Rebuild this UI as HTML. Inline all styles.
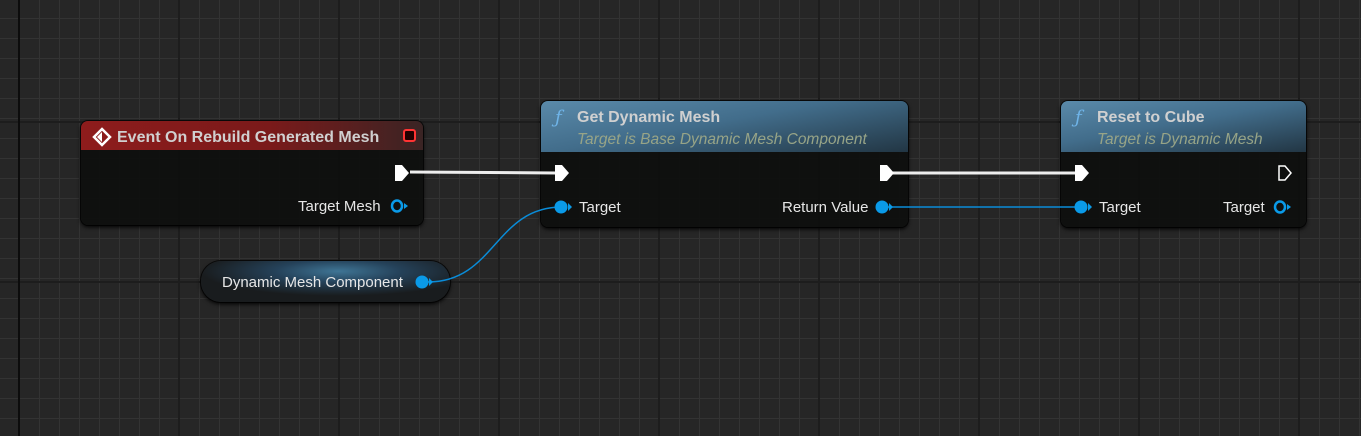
<!DOCTYPE html>
<html><head><meta charset="utf-8"><style>
*{margin:0;padding:0;box-sizing:border-box}
body{width:1361px;height:436px;overflow:hidden;position:relative;font-family:"Liberation Sans",sans-serif;
background-color:#262626;
background-image:
linear-gradient(90deg,transparent 19px,#0c0c0c 19px,#0c0c0c 21px,transparent 21px),
linear-gradient(90deg,#1d1d1d 2px,transparent 2px),
linear-gradient(0deg,transparent 158px,#1d1d1d 158px,#1d1d1d 160px,transparent 160px),
linear-gradient(90deg,#333 1px,transparent 1px),
linear-gradient(0deg,#333 1px,transparent 1px);
background-size:100% 100%,160px 160px,160px 160px,20px 20px,20px 20px;
background-repeat:no-repeat,repeat,repeat,repeat,repeat;
background-position:-1px 0,18px 0,0 -39px,19px 0,0 19px;}
.node{position:absolute;border-radius:7px;background:rgba(14,15,14,0.94);box-shadow:0 2px 4px #000,0 0 0 1px #0a0a0a;overflow:hidden}
.hdr{position:absolute;left:0;right:0;top:0}
.t{position:absolute;color:#d0d0d0;font-weight:bold;font-size:16px;white-space:nowrap}
.s{position:absolute;color:#97a487;font-style:italic;font-size:15.5px;white-space:nowrap}
.l{position:absolute;color:#e6e6e6;font-size:15px;white-space:nowrap}
.f{position:absolute;color:#6fb4e8;font-style:italic;font-family:"DejaVu Serif",serif;font-size:18px}
svg{position:absolute;left:0;top:0}
</style></head><body>

<div class="node" style="left:81px;top:121px;width:342px;height:104px">
 <div class="hdr" style="height:29px;background:linear-gradient(90deg,#8e1c1c 0%,#7a1a1a 55%,#3a2424 100%)"></div>
 <div class="t" style="left:36px;top:8px">Event On Rebuild Generated Mesh</div>
 <div class="l" style="left:217px;top:77px">Target Mesh</div>
</div>

<div class="node" style="left:541px;top:101px;width:367px;height:126px">
 <div class="hdr" style="height:51px;background:linear-gradient(170deg,#5a8aaa 0%,#426d8b 45%,#223644 100%)"></div>
 <div class="f" style="left:14px;top:6px">ƒ</div>
 <div class="t" style="left:36px;top:8px">Get Dynamic Mesh</div>
 <div class="s" style="left:36px;top:30px">Target is Base Dynamic Mesh Component</div>
 <div class="l" style="left:38px;top:98px">Target</div>
 <div class="l" style="left:241px;top:98px">Return Value</div>
</div>

<div class="node" style="left:1061px;top:101px;width:245px;height:126px">
 <div class="hdr" style="height:51px;background:linear-gradient(170deg,#5a8aaa 0%,#426d8b 45%,#223644 100%)"></div>
 <div class="f" style="left:14px;top:6px">ƒ</div>
 <div class="t" style="left:36px;top:8px">Reset to Cube</div>
 <div class="s" style="left:36px;top:30px">Target is Dynamic Mesh</div>
 <div class="l" style="left:38px;top:98px">Target</div>
 <div class="l" style="left:162px;top:98px">Target</div>
</div>

<div class="node" style="left:201px;top:261px;width:249px;height:41px;border-radius:20px;background:radial-gradient(ellipse 55% 60% at 55% 25%,#3f7595 0%,#25425a 45%,#191c1e 100%)">
 <div class="l" style="left:21px;top:13px">Dynamic Mesh Component</div>
</div>

<svg width="1361" height="436">
 <line x1="410" y1="172" x2="556" y2="173" stroke="#eee" stroke-width="3"/>
 <line x1="890" y1="173" x2="1076" y2="173" stroke="#eee" stroke-width="3"/>
 <line x1="886" y1="207" x2="1080" y2="207" stroke="#0a8cd8" stroke-width="1.5"/>
 <path d="M428 282 C495 282 495 207 562 207" fill="none" stroke="#0a8cd8" stroke-width="1.5"/>
 <path d="M102 129 L110 137 L102 145 L94 137 Z" fill="none" stroke="#fff" stroke-width="2.5"/>
 <path d="M102 132 L102 142 L97 137 Z" fill="#fff"/>
 <rect x="404" y="130" width="11" height="11" rx="2" fill="#200" stroke="#f33" stroke-width="2"/>
 <path d="M395 165 h7 l7 8 l-7 8 h-7 z" fill="#fff"/>
 <path d="M555 165 h7 l7 8 l-7 8 h-7 z" fill="#fff"/>
 <path d="M880 165 h7 l7 8 l-7 8 h-7 z" fill="#fff"/>
 <path d="M1075 165 h7 l7 8 l-7 8 h-7 z" fill="#fff"/>
 <path d="M1279 166 h6 l6 7 l-6 7 h-6 z" fill="none" stroke="#fff" stroke-width="1.5"/>
 <ellipse cx="397" cy="206" rx="5" ry="5.5" fill="none" stroke="#0a9ae8" stroke-width="2.5"/><path d="M404 203 l4 3 l-4 3z" fill="#0a9ae8"/>
 <ellipse cx="561" cy="207" rx="6.5" ry="6.5" fill="#0a9ae8"/><path d="M568 203 l4 4 l-4 4z" fill="#0a9ae8"/>
 <ellipse cx="882" cy="207" rx="6.5" ry="6.5" fill="#0a9ae8"/><path d="M889 203 l4 4 l-4 4z" fill="#0a9ae8"/>
 <ellipse cx="1081" cy="207" rx="6.5" ry="6.5" fill="#0a9ae8"/><path d="M1088 203 l4 4 l-4 4z" fill="#0a9ae8"/>
 <ellipse cx="1280" cy="207" rx="5" ry="5.5" fill="none" stroke="#0a9ae8" stroke-width="2.5"/><path d="M1287 204 l4 3 l-4 3z" fill="#0a9ae8"/>
 <ellipse cx="422" cy="282" rx="6.5" ry="6.5" fill="#0a9ae8"/><path d="M429 278 l4 4 l-4 4z" fill="#0a9ae8"/>
</svg>
</body></html>
